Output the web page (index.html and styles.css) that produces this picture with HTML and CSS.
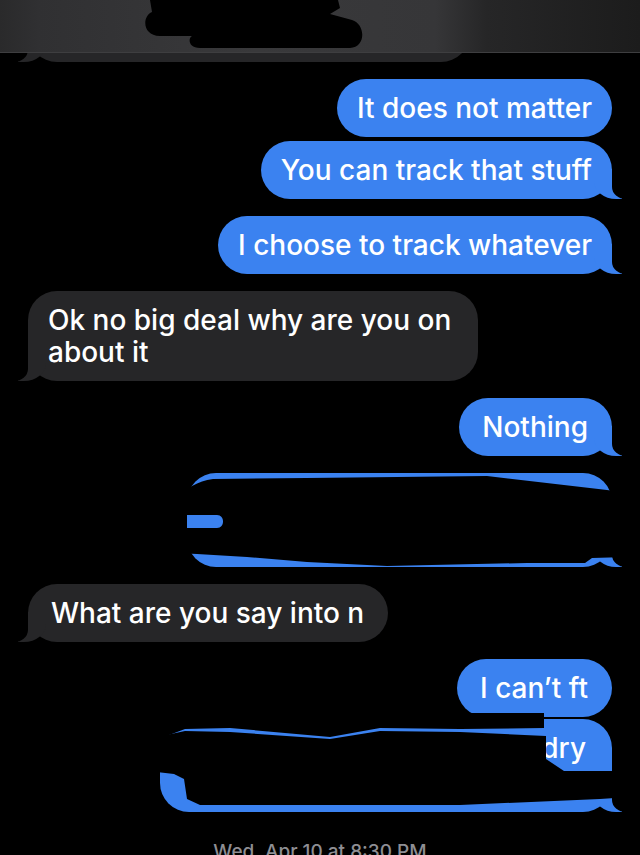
FILE: index.html
```html
<html>
<head>
  <meta charset="utf-8">
  <title>Messages</title>
  <link rel="stylesheet" href="styles.css">
</head>
<body>
<div class="screen">

  <div class="nav">
    <svg class="nav-scribble" width="640" height="52" viewBox="0 0 640 52">
      <path d="M150,0 L338,0 L340,8 L330,14 L352,20 C366,24 366,48 350,48 L200,48 C188,48 188,38 192,36 L160,36 C142,36 142,16 152,12 Z" fill="#000"/>
    </svg>
  </div>

  <div class="thread">
    <div class="bubble received tail top-bubble">&nbsp;</div>

    <div class="bubble sent gap">It does not matter</div>
    <div class="bubble sent tail near">You can track that stuff</div>
    <div class="bubble sent tail gap">I choose to track whatever</div>

    <div class="bubble received tail gap">Ok no big deal why are you on about it</div>

    <div class="bubble sent tail gap wide">Nothing</div>

    <div class="bubble sent tail gap hidden-a">
      <svg class="scribble" width="425" height="94" viewBox="0 0 425 94">
        <path d="M-12,24 C0,16 10,8 26,6 L120,5 L300,3 L420,17 L440,20 L440,84 L405,85 L398,90 L340,90 L200,93 L120,89 L60,84 L10,81 L-12,80 L-12,55 L30,55 C38,55 38,42 30,42 L-12,42 Z" fill="#000"/>
      </svg>
    </div>

    <div class="bubble received tail gap wide">What are you say into n</div>

    <div class="bubble sent gap wide">I can’t ft</div>

    <div class="bubble sent tail touch hidden-b">
      <p class="line">dry</p>
      <svg class="scribble" width="452" height="93" viewBox="0 0 452 93">
        <path d="M-12,-6 L384,-6 L384,9 L300,10 L220,9 L170,18 L70,9 L25,10 L-12,24 Z" fill="#000"/>
        <path d="M-12,20 L25,12 L70,13 L170,20 L220,12 L300,13 L386,17 L386,40 L404,52 L470,52 L470,78 L440,80 L300,86 L40,86 L27,80 L24,60 L14,55 L-12,52 Z" fill="#000"/>
      </svg>
    </div>

    <div class="stamp">Wed, Apr 10 at 8:30 PM</div>
  </div>

</div>
</body>
</html>
```

FILE: styles.css
```css
body {
  margin: 0;
  background-color: #000;
  font-family: Inter, "Noto Sans", sans-serif;
}
.screen {
  position: relative;
  width: 640px;
  height: 855px;
  overflow: hidden;
}
.nav {
  position: absolute;
  top: 0;
  left: 0;
  right: 0;
  height: 52px;
  background: linear-gradient(90deg, #2a2a2b 0%, #303032 6%, #39393b 40%, #363638 68%, #262627 76%, #1c1c1c 100%);
  border-bottom: 1px solid #3e3e40;
  z-index: 5;
}
.nav-scribble {
  display: block;
}
.thread {
  display: flex;
  flex-direction: column;
  padding: 4px 28px 0;
}
.bubble {
  position: relative;
  box-sizing: border-box;
  max-width: 450px;
  padding: 13px 20px;
  border-radius: 29px;
  font-size: 28px;
  font-weight: 500;
  line-height: 32px;
  color: #fff;
}
.sent {
  align-self: flex-end;
  background-color: #3b82f0;
}
.received {
  align-self: flex-start;
  background-color: #262628;
}
.wide {
  padding-left: 23px;
  padding-right: 24px;
}
.gap {
  margin-top: 17px;
}
.near {
  margin-top: 4px;
}
.touch {
  margin-top: 2px;
}
.top-bubble {
  width: 442px;
  height: 58px;
}

/* tails */
.sent.tail::before,
.sent.tail::after,
.received.tail::before,
.received.tail::after {
  content: "";
  position: absolute;
  bottom: 0;
  height: 30px;
}
.sent.tail::before {
  right: -10px;
  width: 28px;
  background-color: #3b82f0;
  border-bottom-left-radius: 22px 18px;
}
.sent.tail::after {
  right: -30px;
  width: 30px;
  background-color: #000;
  border-bottom-left-radius: 14px 12px;
}
.received.tail::before {
  left: -10px;
  width: 28px;
  background-color: #262628;
  border-bottom-right-radius: 22px 18px;
}
.received.tail::after {
  left: -30px;
  width: 30px;
  background-color: #000;
  border-bottom-right-radius: 14px 12px;
}

/* scribbled-over bubbles */
.hidden-a {
  width: 425px;
  height: 94px;
  max-width: none;
}
.hidden-b {
  width: 452px;
  height: 93px;
  max-width: none;
}
.line {
  margin: 0;
  text-align: right;
  padding-right: 6px;
}
.scribble {
  position: absolute;
  left: 0;
  top: 0;
  overflow: visible;
  z-index: 3;
}

.stamp {
  margin-top: 28px;
  text-align: center;
  font-size: 19px;
  line-height: 24px;
  font-weight: 500;
  color: #8e8e93;
}
```
